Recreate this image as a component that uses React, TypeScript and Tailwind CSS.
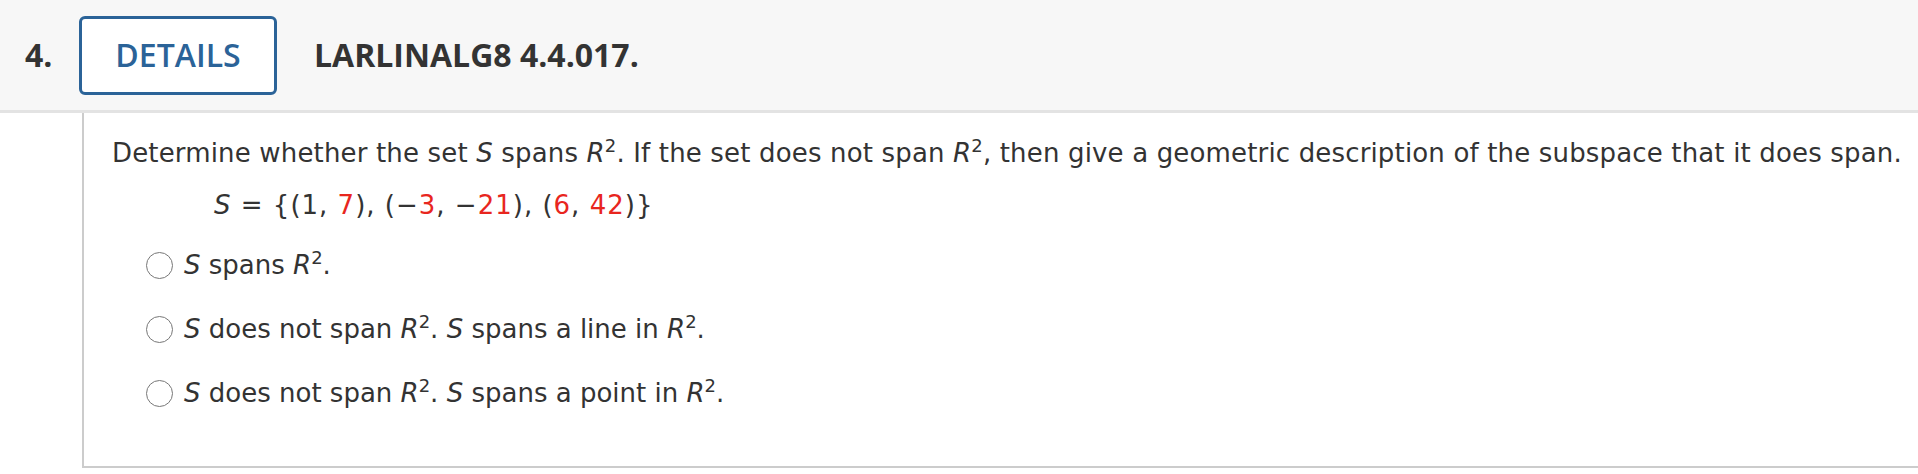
const RED = 'text-[#e8261e]'

function R2() {
  return (
    <>
      <i>R</i>
      <sup className="text-[18px] top-[-0.55em]">2</sup>
    </>
  )
}

function Radio({ children }: { children: React.ReactNode }) {
  return (
    <label className="flex items-center h-[32px]">
      <span className="ml-[34px] h-[27px] w-[27px] shrink-0 rounded-full border-[1.5px] border-[#777] bg-white" />
      <span className="ml-[7px] px-[4px]">{children}</span>
    </label>
  )
}

export default function App() {
  return (
    <div className="w-[1918px] h-[474px] bg-white text-[#333] font-['DejaVu_Sans',Verdana,sans-serif]">
      <div className="flex h-[113px] items-center border-b-[3px] border-[#e3e3e3] bg-[#f7f7f7] font-['Open_Sans',sans-serif] text-[32px]">
        <span className="ml-[25px] w-[54px] font-bold text-[#333]">4.</span>
        <button className="flex h-[79px] w-[198px] items-center justify-center rounded-[6px] border-[3px] border-[#2b6398] bg-white font-semibold text-[#2b6398]">
          DETAILS
        </button>
        <span className="ml-[37px] font-bold text-[#333]">LARLINALG8 4.4.017.</span>
      </div>
      <div className="ml-[82px] h-[355px] border-l-2 border-b-2 border-[#cccccc] pl-[28px] pt-[24px] text-[26px]">
        <p className="leading-[32px] whitespace-nowrap tracking-[0.16px]">
          Determine whether the set <i>S</i> spans <R2 />. If the set does not span <R2 />, then give a geometric description of the subspace that it does span.
        </p>
        <div className="mt-[20px] ml-[102px] leading-[32px] tracking-[1px]">
          <i>S</i> = {'{'}(1, <span className={RED}>7</span>), (−<span className={RED}>3</span>, −<span className={RED}>21</span>), (<span className={RED}>6</span>, <span className={RED}>42</span>){'}'}
        </div>
        <div className="mt-[28px] flex flex-col gap-[32px]">
          <Radio>
            <i>S</i> spans <R2 />.
          </Radio>
          <Radio>
            <i>S</i> does not span <R2 />. <i>S</i> spans a line in <R2 />.
          </Radio>
          <Radio>
            <i>S</i> does not span <R2 />. <i>S</i> spans a point in <R2 />.
          </Radio>
        </div>
      </div>
    </div>
  )
}
